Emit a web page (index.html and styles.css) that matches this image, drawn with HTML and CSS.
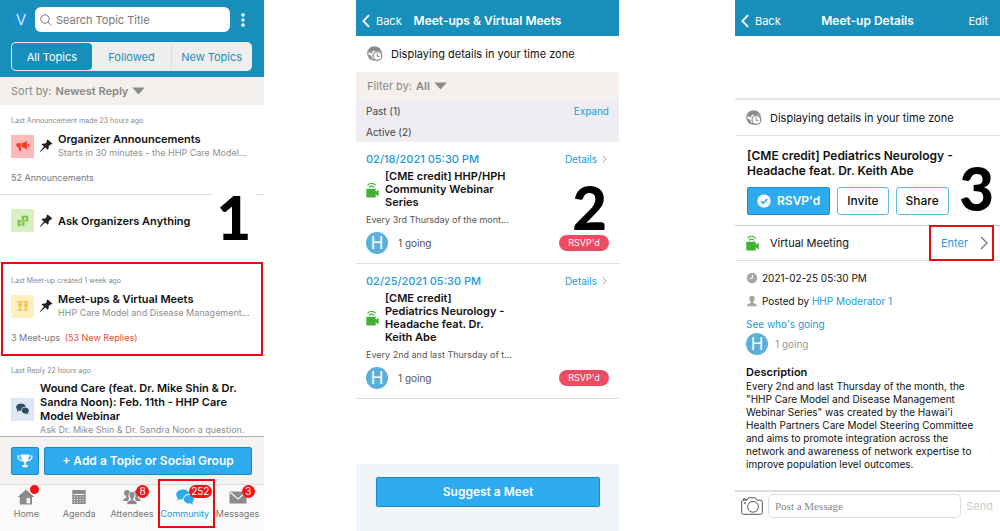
FILE: index.html
```
<!DOCTYPE html>
<html lang="en">
<head>
	<meta charset="UTF-8">
	<meta name="viewport" content="width=device-width, initial-scale=1">
	<title>Meet-ups &amp; Virtual Meets</title>
	<link rel="stylesheet" href="styles.css">
</head>
<body>

	<!-- shared icons -->
	<svg class="sprite" aria-hidden="true">
		<symbol id="i-pin" viewBox="0 0 14 14">
			<path d="M8.6 0.6 L13.4 4.6 L12.4 5.6 L11.5 5.4 L9.6 7.4 C9.9 8.8 9.6 9.8 8.8 10.8 L6.2 8.6 L1 13.2 L0.6 12.9 L4.9 7.5 L2.4 5.3 C3.4 4.5 4.6 4.3 6 4.7 L7.9 2.6 L7.6 1.6 Z" fill="#222"/>
		</symbol>
		<symbol id="i-chats" viewBox="0 0 18 16">
			<path d="M7 0.5 C10.6 0.5 13.2 2.4 13.4 5 C9.6 4.8 7 7 7.1 10.5 C6 10.6 5 10.4 4.2 10.1 C3.2 10.9 2 11.3 0.9 11.3 C1.6 10.6 2 9.8 2 9 C0.8 8.1 0.2 6.9 0.2 5.6 C0.2 2.8 3.2 0.5 7 0.5 Z"/>
			<path d="M12.8 6 C15.7 6 17.8 7.9 17.8 10.2 C17.8 11.4 17.2 12.5 16.3 13.2 C16.3 14 16.8 14.8 17.4 15.4 C16.2 15.4 15.2 15 14.4 14.3 C11.1 15 7.9 13.1 7.9 10.2 C7.9 7.8 10.1 6 12.8 6 Z"/>
		</symbol>
		<symbol id="i-globe" viewBox="0 0 16 16">
			<circle cx="7.5" cy="7.5" r="6.7" fill="none" stroke="#8a8a8a" stroke-width="1.2"/>
			<path d="M1.5 4.5 L4 2 L7 1 L12 2.3 L14 5.6 L11 4.6 L8.5 5.6 L7.6 4.6 L5.5 5.2 L5 7.4 L2.5 6.4 Z" fill="#8a8a8a"/>
			<path d="M1.2 8.4 L4 9.6 L5.5 13.5 L3 12.5 Z" fill="#8a8a8a"/>
			<circle cx="10.4" cy="10" r="4.4" fill="#fff" stroke="#8a8a8a" stroke-width="1.2"/>
			<path d="M10.2 7.4 V10.4 H12.6" fill="none" stroke="#8a8a8a"/>
		</symbol>
		<symbol id="i-video" viewBox="0 0 14 16">
			<path d="M1.4 3.4 Q5.6 -1 9.8 3.4 M3 5.4 Q5.6 2.8 8.2 5.4" fill="none" stroke="#43b234" stroke-width="1.1"/>
			<path d="M0.3 6.8 H9.7 V9.8 L12.7 7.6 V14.4 L9.7 12.2 V15.4 H0.3 Z" fill="#43b234"/>
		</symbol>
		<symbol id="i-back" viewBox="0 0 8 14">
			<path d="M7 1.2 L1.4 7 L7 12.8" fill="none" stroke="#fff" stroke-width="1.8"/>
		</symbol>
		<symbol id="i-next" viewBox="0 0 8 14">
			<path d="M1 1 L7 7 L1 13" fill="none" stroke="#777" stroke-width="1.3"/>
		</symbol>
		<symbol id="i-caret" viewBox="0 0 13 8">
			<path d="M0.3 0.5 H12.7 L6.5 7.5 Z" fill="#8a8a8a"/>
		</symbol>
	</svg>

	<div class="board">

		<!-- 1: community topics -->
		<section class="phone topics">
			<header class="bar bar-search">
				<div class="search-row">
					<span class="me">V</span>
					<label class="search">
						<svg width="12" height="12" viewBox="0 0 12 12"><circle cx="5" cy="5" r="4.2" fill="none" stroke="#777"/><path d="M8 8 L11.4 11.4" stroke="#777"/></svg>
						<input type="search" placeholder="Search Topic Title" aria-label="Search Topic Title">
					</label>
					<button class="more" aria-label="More">
						<svg width="4" height="14" viewBox="0 0 4 14" fill="#fff"><circle cx="2" cy="2" r="1.8"/><circle cx="2" cy="7" r="1.8"/><circle cx="2" cy="12" r="1.8"/></svg>
					</button>
				</div>
				<div class="tabs">
					<button class="tab tab-on">All Topics</button>
					<button class="tab">Followed</button>
					<button class="tab tab-line">New Topics</button>
				</div>
			</header>
			<button class="filter">Sort by: <b>Newest Reply</b> <svg width="13" height="8"><use href="#i-caret"/></svg></button>

			<div class="topic-list">
				<article class="topic">
					<p class="meta">Last Announcement made 23 hours ago</p>
					<div class="topic-row">
						<span class="tile tile-red">
							<svg width="14" height="12" viewBox="0 0 14 12" fill="#f5402f"><path d="M11 0.5 V9.8 C9.4 8.2 7.6 7.5 5.6 7.3 V2.9 C7.8 2.8 9.6 2 11 0.5 Z"/><path d="M4.8 2.9 V7.3 L4.6 7.3 L5.4 10.8 H3.2 L2.3 7.3 C0.9 7.3 0.3 6.3 0.3 5.1 C0.3 3.8 1.1 2.9 2.5 2.9 Z"/><rect x="11.8" y="4" width="1.4" height="2.4"/></svg>
						</span>
						<svg class="pin" width="14" height="14"><use href="#i-pin"/></svg>
						<div class="topic-text">
							<h3>Organizer Announcements</h3>
							<p class="sub">Starts in 30 minutes - the HHP Care Model...</p>
						</div>
					</div>
					<p class="count">52 Announcements</p>
				</article>

				<article class="topic topic-ask">
					<div class="topic-row">
						<span class="tile tile-green">
							<svg width="12" height="12" viewBox="0 0 12 12"><path d="M0.5 5 H7.5 V10.5 H3 L1.4 12 V10.5 H0.5 Z" fill="#7cc142"/><path d="M4.5 0.5 H11.5 V6.5 H10.5 V8 L8.8 6.5 H4.5 Z" fill="#7cc142" stroke="#d9efc3" stroke-width=".5"/><path d="M6.8 5.2 L8 2.2 L9.2 5.2 M7.2 4.2 H8.8" fill="none" stroke="#fff" stroke-width=".6"/><circle cx="3.8" cy="8" r="1.2" fill="none" stroke="#fff" stroke-width=".6"/></svg>
						</span>
						<svg class="pin" width="14" height="14"><use href="#i-pin"/></svg>
						<h3>Ask Organizers Anything</h3>
					</div>
				</article>

				<article class="topic topic-marked">
					<p class="meta">Last Meet-up created 1 week ago</p>
					<div class="topic-row">
						<span class="tile tile-yellow">
							<svg width="12" height="12" viewBox="0 0 12 12" fill="#f6bf45"><rect x="0.5" y="1" width="5" height="1.6"/><rect x="6.5" y="1" width="5" height="1.6"/><circle cx="3" cy="5" r="1.9"/><circle cx="9" cy="5" r="1.9"/><path d="M2.3 6 H3.7 V9.4 H5.4 V10.8 H0.6 V9.4 H2.3 Z M8.3 6 H9.7 V9.4 H11.4 V10.8 H6.6 V9.4 H8.3 Z"/></svg>
						</span>
						<svg class="pin" width="14" height="14"><use href="#i-pin"/></svg>
						<div class="topic-text">
							<h3>Meet-ups &amp; Virtual Meets</h3>
							<p class="sub">HHP Care Model and Disease Management...</p>
						</div>
					</div>
					<p class="count">3 Meet-ups <span class="new">(53 New Replies)</span></p>
				</article>

				<article class="topic topic-last">
					<p class="meta">Last Reply 22 hours ago</p>
					<div class="topic-row">
						<span class="tile tile-blue">
							<svg width="13" height="12" viewBox="0 0 18 16" fill="#2f4e60"><use href="#i-chats"/></svg>
						</span>
						<div class="topic-text">
							<h3>Wound Care (feat. Dr. Mike Shin &amp; Dr. Sandra Noon): Feb. 11th - HHP Care Model Webinar</h3>
							<p class="sub">Ask Dr. Mike Shin &amp; Dr. Sandra Noon a question.</p>
						</div>
					</div>
				</article>
			</div>

			<div class="actions">
				<button class="btn btn-cup" aria-label="Leaderboard">
					<svg width="16" height="14" viewBox="0 0 16 14" fill="#fff"><path d="M4 0.5 H12 C12 4.8 11 7.6 8.8 8.6 V11 H10.6 V13.2 H5.4 V11 H7.2 V8.6 C5 7.6 4 4.8 4 0.5 Z"/><path d="M4 2 H1 C1 4.6 2.4 6.4 5.2 7 M12 2 H15 C15 4.6 13.6 6.4 10.8 7" fill="none" stroke="#fff" stroke-width="1.2"/></svg>
				</button>
				<button class="btn btn-add">+ Add a Topic or Social Group</button>
			</div>

			<nav class="nav">
				<a href="#">
					<span class="nav-icon"><svg width="18" height="16" viewBox="0 0 18 16" fill="#8b8b8b"><path d="M9 0.5 L17.2 8 H15 V15.5 H2.8 V8 H0.6 Z"/><path d="M9.6 9 H13 V14.4 H9.6 Z" fill="#f8f8f8"/></svg><i class="dot"></i></span>
					Home
				</a>
				<a href="#">
					<span class="nav-icon"><svg width="14" height="16" viewBox="0 0 14 16"><rect x="0.3" y="1" width="13.4" height="14" fill="#8b8b8b"/><path d="M1.6 5.5 H12.4" stroke="#f8f8f8"/><path d="M2 8 H12 M2 10.5 H12 M2 13 H12" stroke="#f8f8f8" stroke-width="1.2" stroke-dasharray="1.2 1.6"/></svg></span>
					Agenda
				</a>
				<a href="#">
					<span class="nav-icon"><svg width="18" height="16" viewBox="0 0 18 16" fill="#8b8b8b"><circle cx="4" cy="4" r="3"/><circle cx="14" cy="4" r="3"/><path d="M0.2 12 C0.4 9.6 1.6 9.4 3 9 V6 H5 L6 9 L5 12 Z M17.8 12 C17.6 9.6 16.4 9.4 15 9 V6 H13 L12 9 L13 12 Z"/><path d="M9 2.6 C11 2.6 12 4 12 5.8 C12 7.6 11.2 9 10.4 9.6 V11 C12 11.6 14 11.8 14.2 15.5 H3.8 C4 11.8 6 11.6 7.6 11 V9.6 C6.8 9 6 7.6 6 5.8 C6 4 7 2.6 9 2.6 Z" stroke="#f8f8f8" stroke-width=".8"/></svg><i class="badge">8</i></span>
					Attendees
				</a>
				<a href="#" class="nav-on">
					<span class="nav-icon"><svg width="18" height="16" fill="#2eaaee"><use href="#i-chats"/></svg><i class="badge badge-wide">252</i></span>
					Community
				</a>
				<a href="#">
					<span class="nav-icon"><svg width="18" height="16" viewBox="0 0 18 16"><rect x="0.5" y="2.5" width="17" height="12" fill="#8b8b8b"/><path d="M0.8 3 L9 10 L17.2 3" fill="none" stroke="#f8f8f8" stroke-width="1.2"/></svg><i class="badge">3</i></span>
					Messages
				</a>
			</nav>
			<span class="step step-1">1</span>
		</section>

		<!-- 2: meet-ups list -->
		<section class="phone">
			<header class="bar bar-title">
				<button class="back"><svg width="8" height="14"><use href="#i-back"/></svg>Back</button>
				<h2>Meet-ups &amp; Virtual Meets</h2>
				<span></span>
			</header>
			<p class="zone"><svg width="16" height="16"><use href="#i-globe"/></svg>Displaying details in your time zone</p>
			<button class="filter">Filter by: <b>All</b> <svg width="13" height="8"><use href="#i-caret"/></svg></button>
			<div class="groups">
				<p>Past (1) <a href="#">Expand</a></p>
				<p>Active (2)</p>
			</div>

			<article class="meet">
				<div class="meet-top"><time>02/18/2021 05:30 PM</time><a href="#">Details <svg width="5" height="8" viewBox="0 0 8 14"><use href="#i-next"/></svg></a></div>
				<div class="meet-title">
					<svg width="14" height="16"><use href="#i-video"/></svg>
					<h3>[CME credit] HHP/HPH Community Webinar Series</h3>
				</div>
				<p class="meet-desc">Every 3rd Thursday of the mont...</p>
				<div class="going"><span class="avatar">H</span>1 going <span class="pill">RSVP'd</span></div>
			</article>

			<article class="meet">
				<div class="meet-top"><time>02/25/2021 05:30 PM</time><a href="#">Details <svg width="5" height="8" viewBox="0 0 8 14"><use href="#i-next"/></svg></a></div>
				<div class="meet-title">
					<svg width="14" height="16"><use href="#i-video"/></svg>
					<h3>[CME credit] Pediatrics Neurology - Headache feat. Dr. Keith Abe</h3>
				</div>
				<p class="meet-desc">Every 2nd and last Thursday of t...</p>
				<div class="going"><span class="avatar">H</span>1 going <span class="pill">RSVP'd</span></div>
			</article>

			<footer class="suggest">
				<button class="btn">Suggest a Meet</button>
			</footer>
			<span class="step step-2">2</span>
		</section>

		<!-- 3: meet-up details -->
		<section class="phone details">
			<header class="bar bar-title">
				<button class="back"><svg width="8" height="14"><use href="#i-back"/></svg>Back</button>
				<h2>Meet-up Details</h2>
				<button class="edit">Edit</button>
			</header>
			<p class="zone zone-lined"><svg width="16" height="16"><use href="#i-globe"/></svg>Displaying details in your time zone</p>
			<div class="event">
				<h1>[CME credit] Pediatrics Neurology - Headache feat. Dr. Keith Abe</h1>
				<div class="event-buttons">
					<button class="btn btn-rsvp"><svg width="14" height="14" viewBox="0 0 14 14"><circle cx="7" cy="7" r="6.6" fill="#fff"/><path d="M4 7.2 L6.2 9.3 L10.2 5" fill="none" stroke="#2eaaee" stroke-width="1.6"/></svg>RSVP'd</button>
					<button class="btn btn-line">Invite</button>
					<button class="btn btn-line">Share</button>
				</div>
			</div>
			<div class="virtual">
				<svg width="14" height="16"><use href="#i-video"/></svg>
				<span>Virtual Meeting</span>
				<a class="enter" href="#">Enter <svg width="8" height="14"><use href="#i-next"/></svg></a>
			</div>
			<div class="facts">
				<p><svg width="12" height="12" viewBox="0 0 12 12"><circle cx="6" cy="6" r="5.2" fill="#a5a5a5"/><path d="M6.4 2.8 V6.4 H3.8" fill="none" stroke="#fff"/></svg>2021-02-25 05:30 PM</p>
				<p><svg width="12" height="12" viewBox="0 0 12 12" fill="#a5a5a5"><path d="M6 0.8 C7.8 0.8 8.7 2 8.7 3.6 C8.7 5.2 8 6.4 7.3 7 V8 C9 8.6 10.8 8.8 11 11.2 H1 C1.2 8.8 3 8.6 4.7 8 V7 C4 6.4 3.3 5.2 3.3 3.6 C3.3 2 4.2 0.8 6 0.8 Z"/></svg><span>Posted by <a href="#">HHP Moderator 1</a></span></p>
				<a class="who" href="#">See who's going</a>
				<div class="going"><span class="avatar">H</span>1 going</div>
				<h4>Description</h4>
				<p class="about">Every 2nd and last Thursday of the month, the "HHP Care Model and Disease Management Webinar Series" was created by the Hawai'i Health Partners Care Model Steering Committee and aims to promote integration across the network and awareness of network expertise to improve population level outcomes.</p>
			</div>
			<form class="post">
				<svg width="22" height="18" viewBox="0 0 22 18" fill="none" stroke="#555"><path d="M2.5 3.2 H6 L7.6 0.8 H14.4 L16 3.2 H19.5 Q21.3 3.2 21.3 5 V15.5 Q21.3 17.3 19.5 17.3 H2.5 Q0.7 17.3 0.7 15.5 V5 Q0.7 3.2 2.5 3.2 Z M2.5 3 V1.8 H4.8 V3"/><circle cx="12" cy="9.8" r="5.4"/><circle cx="4" cy="6" r=".6"/></svg>
				<input type="text" placeholder="Post a Message" aria-label="Post a Message">
				<button type="button">Send</button>
			</form>
			<span class="step step-3">3</span>
		</section>

	</div>
</body>
</html>
```
FILE: styles.css
```
* {
	box-sizing: border-box;
}

body {
	margin: 0;
	background: #fff;
	color: #111;
	font-family: Inter, "Liberation Sans", sans-serif;
	font-size: 11px;
	line-height: 14px;
}

h1, h2, h3, h4, p {
	margin: 0;
}

a {
	color: #1a9ae0;
	text-decoration: none;
}

button, input {
	font: inherit;
	border: 0;
	padding: 0;
	margin: 0;
	background: none;
}

svg {
	display: block;
	flex: none;
}

.sprite {
	position: absolute;
	width: 0;
	height: 0;
}

/* three phones side by side */
.board {
	display: grid;
	grid-template-columns: 264fr 92fr 263fr 116fr 265fr;
	min-height: 100vh;
}

.phone {
	position: relative;
	display: flex;
	flex-direction: column;
	min-width: 0;
}

.phone:nth-child(2) {
	grid-column: 3;
}

.phone:nth-child(3) {
	grid-column: 5;
}

/* big step numbers */
.step {
	position: absolute;
	font-family: Lato, sans-serif;
	font-weight: 900;
	font-size: 60px;
	line-height: 44px;
	color: #000;
}

.step-1 {
	top: 191px;
	right: 8px;
	width: 44px;
	padding-top: 4px;
	text-align: center;
	background: #fff;
}

.step-2 {
	top: 185px;
	right: 12px;
}

.step-3 {
	top: 166px;
	right: 6px;
}

/* top bars */
.bar {
	background: #188fbb;
	color: #fff;
}

.bar-search {
	padding: 7px 12px 6px 11px;
}

.search-row {
	display: flex;
	align-items: center;
}

.me {
	width: 20px;
	height: 20px;
	margin-right: 4px;
	border-radius: 50%;
	background: #1b8ecb;
	font-size: 15px;
	font-weight: 300;
	line-height: 20px;
	text-align: center;
}

.search {
	flex: 1;
	display: flex;
	align-items: center;
	gap: 4px;
	min-width: 0;
	height: 25px;
	padding: 0 5px;
	border-radius: 6px;
	background: #fff;
}

.search input {
	flex: 1;
	min-width: 0;
}

.search input::placeholder {
	color: #777;
}

.more {
	margin: 0 7px 0 11px;
}

.tabs {
	display: grid;
	grid-template-columns: 1fr 1fr 1fr;
	height: 29px;
	margin-top: 10px;
	padding: 1px;
	border-radius: 5px;
	background: #eee;
}

.tab {
	border-radius: 4px;
	color: #188fbb;
	white-space: nowrap;
}

.tab-on {
	background: #188fbb;
	color: #fff;
}

.tab-line {
	border-left: 1px solid #ddd;
	border-radius: 0;
}

.bar-title {
	display: grid;
	grid-template-columns: 1fr auto 1fr;
	align-items: center;
	height: 36px;
	padding: 5px 6px 0;
}

.bar-title h2 {
	font-size: 12px;
	font-weight: 600;
}

.back {
	display: flex;
	align-items: center;
	gap: 6px;
	color: #fff;
}

.edit {
	justify-self: end;
	margin-right: 6px;
	color: #fff;
}

.filter {
	display: flex;
	align-items: center;
	gap: 4px;
	height: 28px;
	padding: 0 11px;
	background: #f4f0ed;
	color: #888;
}

.filter b {
	font-weight: 600;
}

/* topics */
.topic-list {
	flex: 1 1 0;
	min-height: 0;
	overflow: hidden;
}

.topic {
	padding: 9px 11px;
	border-bottom: 1px solid #ddd;
}

.topic h3 {
	font-size: 11px;
	font-weight: 600;
	line-height: 14px;
}

.topic-row {
	display: flex;
	align-items: center;
}

.topic-text {
	flex: 1;
	min-width: 0;
}

.meta {
	margin-bottom: 4px;
	color: #8a8a8a;
	font-size: 7px;
}

.sub {
	color: #909090;
	font-size: 9px;
	white-space: nowrap;
}

.count {
	margin-top: 11px;
	color: #777;
	font-size: 9px;
}

.new {
	margin-left: 2px;
	color: #f04a35;
}

.pin {
	margin: 0 5px;
}

.tile {
	display: flex;
	align-items: center;
	justify-content: center;
	flex: none;
	width: 23px;
	height: 23px;
}

.tile-red {
	background: #ffb9b8;
}

.tile-green {
	background: #d7efc3;
}

.tile-yellow {
	background: #fff0c0;
}

.tile-blue {
	margin-right: 6px;
	background: #dde8f4;
}

.topic-ask {
	padding-top: 14px;
	padding-bottom: 30px;
	border: 0;
}

.topic-marked {
	border: 2px solid #e80c10;
	margin: 0 1px;
	padding: 10px 8px 9px;
}

.topic-last {
	padding-top: 8px;
	padding-bottom: 0;
	border: 0;
}

.topic-last .meta {
	margin-bottom: 3px;
}

/* buttons */
.btn {
	height: 28px;
	border: 1px solid #2089c2;
	border-radius: 2px;
	background: #2eaaee;
	color: #fff;
	font-size: 12px;
	font-weight: 600;
}

.actions {
	display: flex;
	gap: 5px;
	padding: 10px 12px 9px 11px;
	border-top: 1px solid #a9b2ae;
	background: #f4f3f2;
}

.btn-cup {
	display: flex;
	align-items: center;
	justify-content: center;
	width: 28px;
}

.btn-add {
	flex: 1;
}

/* bottom navigation */
.nav {
	display: grid;
	grid-template-columns: repeat(5, 1fr);
	height: 47px;
	padding-top: 4px;
	border-top: 1px solid #ddd;
	background: #fafafa;
}

.nav a {
	position: relative;
	display: flex;
	flex-direction: column;
	align-items: center;
	color: #777;
	font-size: 9px;
}

.nav-icon {
	position: relative;
	margin-bottom: 2px;
}

.nav .nav-on {
	color: #1a9ae0;
}

.nav-on::after {
	content: "";
	position: absolute;
	inset: -10px -4px auto 0;
	border: 2px solid #e80c10;
	height: 45px;
	z-index: 1;
}

.dot, .badge {
	position: absolute;
	top: -4px;
	left: 13px;
	border-radius: 7px;
	background: #f5101c;
}

.dot {
	width: 9px;
	height: 9px;
}

.badge {
	min-width: 13px;
	height: 13px;
	color: #fff;
	font-style: normal;
	font-size: 10px;
	line-height: 13px;
	text-align: center;
}

.badge-wide {
	width: 23px;
}

/* meet-ups list */
.zone {
	display: flex;
	align-items: center;
	gap: 8px;
	height: 36px;
	padding: 0 11px;
}

.groups {
	padding: 0 10px;
	background: #efedf1;
	color: #444;
	font-size: 10px;
}

.groups p {
	display: flex;
	justify-content: space-between;
	align-items: center;
	height: 21px;
}

.meet {
	padding: 10px 10px 9px;
	border-bottom: 1px solid #ddd;
}

.meet-top {
	display: flex;
	justify-content: space-between;
	align-items: center;
	margin-bottom: 4px;
	font-size: 10px;
}

.meet-top time {
	color: #1a9ae0;
	font-size: 11px;
	font-weight: 500;
}

.meet-top a {
	display: flex;
	align-items: center;
	gap: 5px;
	padding-right: 2px;
}

.meet-title {
	display: flex;
	align-items: center;
	gap: 5px;
	width: 58%;
}

.meet-title h3 {
	font-size: 11px;
	font-weight: 600;
	line-height: 13px;
}

.meet-desc {
	margin-top: 4px;
	color: #555;
	font-size: 9px;
}

.going {
	display: flex;
	align-items: center;
	gap: 10px;
	margin-top: 5px;
	color: #555;
	font-size: 10px;
}

.avatar {
	width: 22px;
	height: 22px;
	border-radius: 50%;
	background: #5bafdc;
	color: #fff;
	font-size: 17px;
	line-height: 22px;
	text-align: center;
}

.pill {
	width: 50px;
	height: 16px;
	margin-left: auto;
	border-radius: 8px;
	background: #ee4a60;
	color: #fff;
	font-size: 9px;
	line-height: 16px;
	text-align: center;
}

.suggest {
	margin-top: auto;
	padding: 13px 19px 24px 20px;
	background: #f1f5f9;
}

.suggest .btn {
	display: block;
	width: 100%;
	height: 30px;
}

/* meet-up details */
.zone-lined {
	height: 38px;
	margin-top: 62px;
	border-top: 2px solid #e4e4e4;
	border-bottom: 1px solid #e4e4e4;
}

.event {
	padding: 12px 12px 10px;
}

.event h1 {
	width: 90%;
	font-size: 12px;
	font-weight: 600;
	line-height: 15px;
}

.event-buttons {
	display: flex;
	gap: 7px;
	margin-top: 9px;
}

.btn-rsvp {
	display: flex;
	align-items: center;
	gap: 6px;
	padding: 0 9px;
}

.btn-line {
	padding: 0 9px;
	border-color: #5bb8ea;
	border-radius: 3px;
	background: #fff;
	color: #111;
	font-weight: 500;
}

.virtual {
	display: flex;
	align-items: center;
	gap: 10px;
	height: 36px;
	padding-left: 11px;
	padding-right: 6px;
	border-top: 1px solid #ccc;
	border-bottom: 1px solid #ddd;
}

.enter {
	display: flex;
	align-items: center;
	justify-content: space-between;
	width: 65px;
	height: 36px;
	margin-left: auto;
	padding: 0 4px 0 10px;
	border: 2px solid #e80c10;
}

.facts {
	padding: 10px 11px;
	font-size: 10px;
}

.facts p {
	display: flex;
	align-items: center;
	gap: 4px;
	margin-bottom: 9px;
}

.who {
	display: block;
}

.facts .going {
	margin-top: 2px;
	gap: 7px;
	color: #999;
}

.facts h4 {
	margin-top: 10px;
	font-size: 11px;
	font-weight: 600;
}

.facts .about {
	display: block;
	margin: 1px 0 0;
	padding-right: 10px;
	line-height: 13px;
}

.post {
	display: flex;
	align-items: center;
	gap: 5px;
	margin-top: auto;
	padding: 2px 7px 13px 6px;
	border-top: 2px solid #ddd;
}

.post input {
	flex: 1;
	min-width: 0;
	height: 24px;
	padding: 0 6px;
	border: 1px solid #ddd;
	border-radius: 5px;
	font-family: "Liberation Serif", serif;
}

.post input::placeholder {
	color: #888;
}

.post button {
	color: #ccc;
}
```
